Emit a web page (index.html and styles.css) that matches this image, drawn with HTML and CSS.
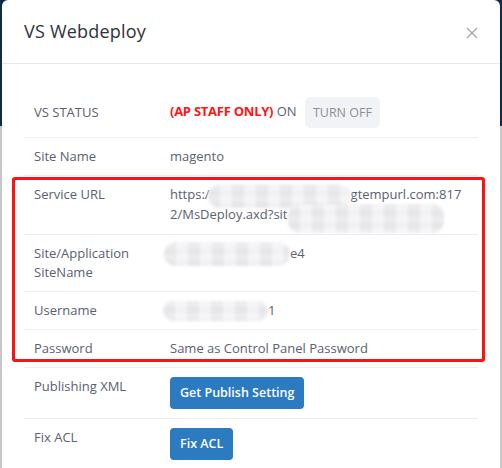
FILE: index.html
```html
<!DOCTYPE html>
<html lang="en">
<head>
<meta charset="utf-8">
<title>VS Webdeploy</title>
<link rel="stylesheet" href="styles.css">
</head>
<body>
<div class="modal">
  <div class="modal-header">
    <h1 class="title">VS Webdeploy</h1>
    <span class="close" aria-label="Close">
      <svg width="12" height="12" viewBox="0 0 12 12"><path d="M1 1 L11 11 M11 1 L1 11" stroke="#a3a8b0" stroke-width="1.4" fill="none"/></svg>
    </span>
  </div>
  <div class="modal-body">
    <table class="info">
      <tr class="first">
        <td class="label">VS STATUS</td>
        <td class="value"><span class="staff">(AP STAFF ONLY)</span> ON <span class="btn-light">TURN OFF</span></td>
      </tr>
      <tr>
        <td class="label">Site Name</td>
        <td class="value">magento</td>
      </tr>
      <tr>
        <td class="label">Service URL</td>
        <td class="value">https:/<span class="mosaic m1"></span>gtempurl.com:817<br>2/MsDeploy.axd?sit<span class="mosaic m2"></span></td>
      </tr>
      <tr>
        <td class="label">Site/Application<br>SiteName</td>
        <td class="value"><span class="mosaic m3"></span>e4</td>
      </tr>
      <tr>
        <td class="label">Username</td>
        <td class="value"><span class="mosaic m4"></span>1</td>
      </tr>
      <tr>
        <td class="label">Password</td>
        <td class="value">Same as Control Panel Password</td>
      </tr>
      <tr>
        <td class="label">Publishing XML</td>
        <td class="value"><span class="btn-blue">Get Publish Setting</span></td>
      </tr>
      <tr class="last">
        <td class="label">Fix ACL</td>
        <td class="value"><span class="btn-blue">Fix ACL</span></td>
      </tr>
    </table>
  </div>
  <div class="annotation"></div>
</div>
</body>
</html>
```

FILE: styles.css
```css
html, body {
  margin: 0;
  padding: 0;
}
body {
  width: 502px;
  height: 468px;
  overflow: hidden;
  background: linear-gradient(#0e2b47 0 126px, #c6c6c6 126px);
  font-family: "Open Sans", "Liberation Sans", sans-serif;
}
.modal {
  position: relative;
  margin-left: 2px;
  width: 498px;
  height: 468px;
  background: #fff;
  border-radius: 6px 6px 0 0;
}
.modal-header {
  height: 63px;
  border-bottom: 1px solid #e6e9ed;
  display: flex;
  align-items: center;
  justify-content: space-between;
  padding: 0 22px 0 22px;
}
.title {
  margin: 0;
  font-size: 18px;
  font-weight: 500;
  color: #2f3238;
  letter-spacing: 0.2px;
  padding-bottom: 2px;
}
.close {
  display: flex;
  width: 12px;
  height: 12px;
  margin-top: 2px;
}
.modal-body {
  padding: 23px 22px 0 22px;
}
.info {
  width: 454px;
  border-collapse: collapse;
  font-size: 13px;
  line-height: 19px;
  color: #5b6170;
}
.info tr {
  border-bottom: 1px solid #eceef1;
}
.info tr.last {
  border-bottom: none;
}
.info td {
  padding: 9px 0;
  vertical-align: top;
}
.info tr.first td {
  padding: 10px 0 9px;
  vertical-align: middle;
}
.label {
  width: 136px;
  padding-left: 10px !important;
}
.value {
  white-space: nowrap;
}
.staff {
  color: #ff1414;
  font-weight: 700;
  font-size: 13px;
  letter-spacing: -0.25px;
}
.btn-light {
  display: inline-block;
  margin-left: 5px;
  height: 31px;
  line-height: 31px;
  padding: 0 8px;
  border-radius: 5px;
  background: #f1f3f6;
  color: #8b909a;
  font-size: 12.5px;
  vertical-align: middle;
}
.btn-blue {
  display: inline-block;
  height: 32px;
  line-height: 32px;
  padding: 0 10px;
  border-radius: 4px;
  background: #2c7abf;
  color: #fff;
  font-weight: 600;
  font-size: 12.5px;
}
.mosaic {
  display: inline-block;
  vertical-align: middle;
  height: 24px;
  margin: -3px 0;
  border-radius: 12px;
  background-color: #ebebee;
  background-image:
    linear-gradient(90deg, rgba(0,0,0,0.02) 50%, rgba(255,255,255,0.3) 50%),
    linear-gradient(rgba(255,255,255,0.3) 50%, transparent 50%);
  background-size: 24px 100%, 100% 12px;
  filter: blur(1.6px);
}
.m1 {
  width: 143px;
  margin-left: -2px;
}
.m2 {
  width: 156px;
  height: 29px;
  margin: -5px 0 -5px 0;
  transform: translateY(3px);
}
.m3 {
  width: 126px;
  margin-left: -6px;
}
.m4 {
  width: 105px;
  height: 20px;
  margin: -1px 0 -1px -7px;
}
.annotation {
  position: absolute;
  left: 10px;
  top: 177px;
  width: 473px;
  height: 185px;
  box-sizing: border-box;
  border: 3px solid #ff1111;
  border-radius: 3px;
}
```
